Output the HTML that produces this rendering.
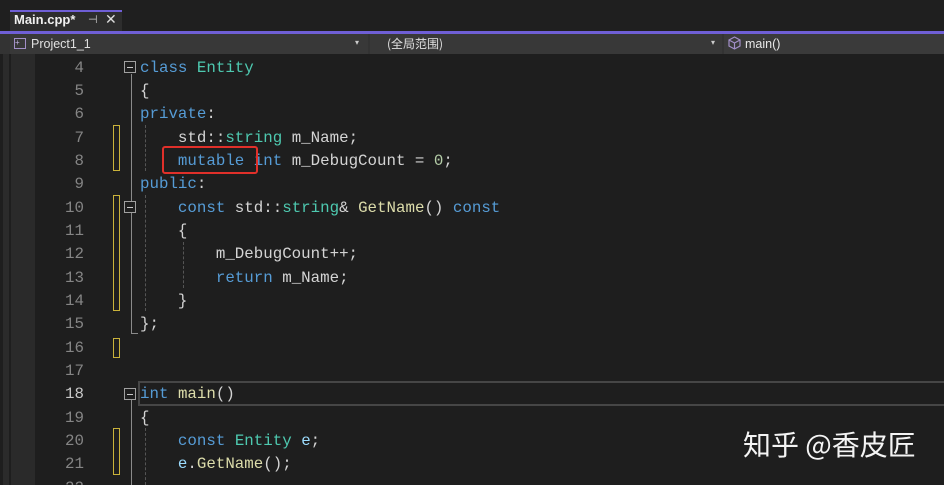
<!DOCTYPE html>
<html><head><meta charset="utf-8"><style>
*{margin:0;padding:0;box-sizing:border-box}
html,body{width:944px;height:485px;overflow:hidden}
body{background:#1e1e1e;position:relative;font-family:"Liberation Sans","Noto Sans CJK SC",sans-serif}
.abs{position:absolute}
.nt{position:absolute;top:34px;height:20px;line-height:20px;font-size:12.5px;color:#e0e0e0;white-space:nowrap}
.ln{position:absolute;left:40px;width:44px;text-align:right;font-family:"Liberation Mono",monospace;font-size:15.8px;color:#858585;line-height:23.35px}
.cd{position:absolute;left:140px;font-family:"Liberation Mono",monospace;font-size:15.8px;color:#d4d4d4;line-height:23.35px;white-space:pre}
.k{color:#569cd6}.t{color:#4ec9b0}.f{color:#dcdcaa}.v{color:#9cdcfe}.n{color:#b5cea8}
.chg{position:absolute;left:113px;width:7px;border:1.5px solid #c9b23a}
.box{position:absolute;left:124px;width:12px;height:12px;border:1px solid #a0a0a0;background:#1e1e1e}
.box:after{content:"";position:absolute;left:2px;top:4.5px;width:6px;height:1.5px;background:#c8c8c8}
.vl{position:absolute;width:1px;background:#8a8a8a}
.dl{position:absolute;width:0;border-left:1px dashed #555}
</style></head><body>
<div class="abs" style="left:0;top:0;width:944px;height:31px;background:#1f1f1f"></div>
<div class="abs" style="left:10px;top:10px;width:112px;height:21px;background:#2d2d2d;border-top:2px solid #6f5fd6"></div>
<div class="abs" style="left:14px;top:12px;font-size:13px;font-weight:bold;color:#f0f0f0">Main.cpp*</div>
<div class="abs" style="left:88px;top:13px;font-size:11px;color:#ccc">⊣</div>
<div class="abs" style="left:105px;top:11px;font-size:14px;color:#ddd">✕</div>
<div class="abs" style="left:0;top:31px;width:944px;height:3px;background:#6f5fd6"></div>
<div class="abs" style="left:0;top:34px;width:944px;height:20px;background:#333"></div>
<div class="abs" style="left:10px;top:34px;width:358px;height:20px;background:#383838"></div>
<div class="abs" style="left:14px;top:38px;width:12px;height:11px;border:1px solid #a28fc8;font-size:8px;color:#c0b0e0;line-height:8px">+</div>
<div class="nt" style="left:31px">Project1_1</div>
<div class="abs" style="left:355px;top:38px;font-size:8px;color:#ccc">▾</div>
<div class="abs" style="left:370px;top:34px;width:352px;height:20px;background:#383838"></div>
<div class="nt" style="left:387px;font-family:'Noto Sans CJK SC',sans-serif;font-size:12px">(全局范围)</div>
<div class="abs" style="left:711px;top:38px;font-size:8px;color:#ccc">▾</div>
<div class="abs" style="left:724px;top:34px;width:220px;height:20px;background:#3a3a3a"></div>
<svg class="abs" style="left:728px;top:36px" width="13" height="14" viewBox="0 0 13 14"><path d="M6.5 1L12 4v6l-5.5 3L1 10V4z M1 4l5.5 3L12 4 M6.5 7v6" fill="none" stroke="#a28fc8" stroke-width="1.2"/></svg>
<div class="nt" style="left:745px;color:#e8e8e8">main()</div>
<div class="abs" style="left:3px;top:54px;width:6px;height:431px;background:#2b2b2b"></div>
<div class="abs" style="left:11px;top:54px;width:24px;height:431px;background:#2a2a2a"></div>
<div class="abs" style="left:138px;top:381px;width:806px;height:25px;border:2px solid #464646;border-right:none"></div>
<div class="ln" style="top:56.5px">4<br>5<br>6<br>7<br>8<br>9<br>10<br>11<br>12<br>13<br>14<br>15<br>16<br>17<br><span style="color:#c8c8c8">18</span><br>19<br>20<br>21<br>22</div>
<div class="chg" style="top:125px;height:46px"></div>
<div class="chg" style="top:195px;height:116px"></div>
<div class="chg" style="top:338px;height:20px"></div>
<div class="chg" style="top:428px;height:47px"></div>
<div class="vl" style="left:131px;top:74px;height:260px"></div>
<div class="abs" style="left:131px;top:333px;width:7px;height:1px;background:#8a8a8a"></div>
<div class="vl" style="left:131px;top:400px;height:85px"></div>
<div class="box" style="left:124px;top:61px"></div>
<div class="box" style="left:124px;top:201px"></div>
<div class="box" style="left:124px;top:388px"></div>
<div class="dl" style="left:145px;top:125px;height:46px"></div>
<div class="dl" style="left:145px;top:195px;height:116px"></div>
<div class="dl" style="left:183px;top:242px;height:46px"></div>
<div class="dl" style="left:145px;top:428px;height:57px"></div>
<div class="cd" style="top:56.5px"><span class="k">class</span> <span class="t">Entity</span>
{
<span class="k">private</span>:
    std::<span class="t">string</span> m_Name;
    <span class="k">mutable</span> <span class="k">int</span> m_DebugCount = <span class="n">0</span>;
<span class="k">public</span>:
    <span class="k">const</span> std::<span class="t">string</span>&amp; <span class="f">GetName</span>() <span class="k">const</span>
    {
        m_DebugCount++;
        <span class="k">return</span> m_Name;
    }
};


<span class="k">int</span> <span class="f">main</span>()
{
    <span class="k">const</span> <span class="t">Entity</span> <span class="v">e</span>;
    <span class="v">e</span>.<span class="f">GetName</span>();
</div>
<div class="abs" style="left:162px;top:146px;width:96px;height:28px;border:2.5px solid #e0302a;border-radius:3px"></div>
<div class="abs" style="left:743px;top:426px;font-size:28px;line-height:36px;color:#f4f4f4;font-family:'Noto Sans CJK SC',sans-serif">知乎 @香皮匠</div>
</body></html>
